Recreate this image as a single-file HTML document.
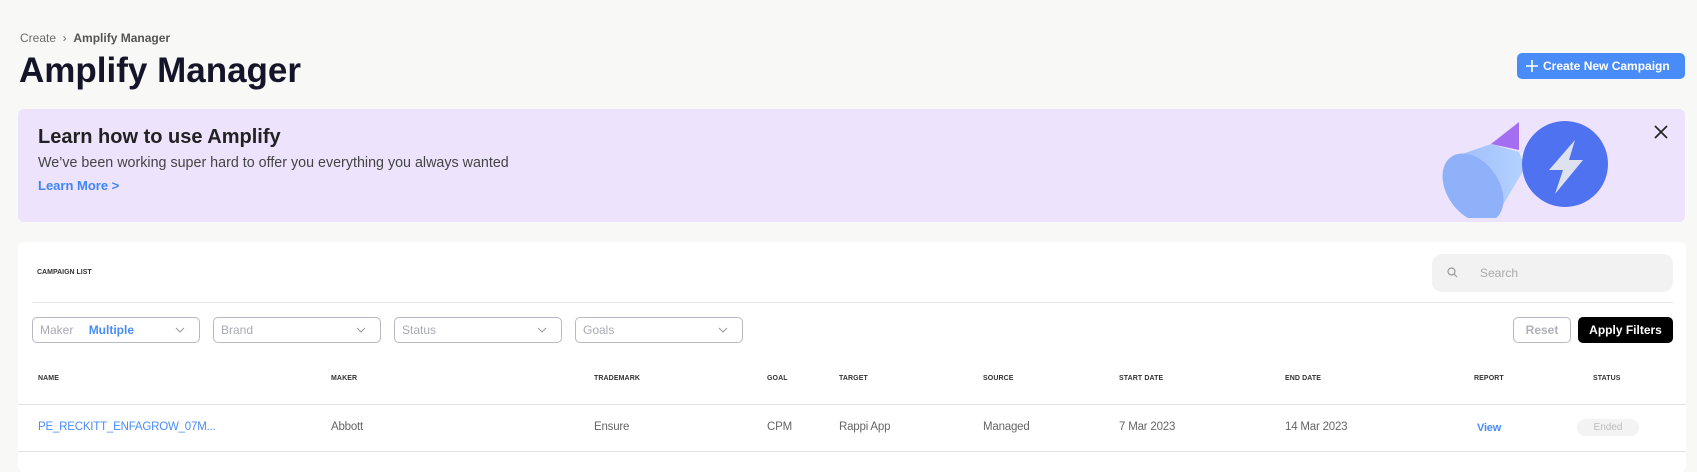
<!DOCTYPE html>
<html><head><meta charset="utf-8"><style>
*{margin:0;padding:0;box-sizing:border-box}
body{width:1697px;height:453px;overflow:hidden;background:#f8f8f6;font-family:"Liberation Sans",sans-serif;position:relative;color:#1a1a2e}
.a{position:absolute;white-space:nowrap}
.bc{left:20px;top:31px;font-size:12px;color:#6b6b6b}
.bc b{color:#555;font-weight:bold}
.title{left:19px;top:51px;font-size:35px;font-weight:bold;color:#15152a;letter-spacing:0px}
.btn{left:1517px;top:53px;width:168px;height:26px;background:#4a8cf7;border-radius:5px;color:#fff;font-size:12px;font-weight:bold;line-height:26px;padding-left:26px}
.banner{left:18px;top:109px;width:1667px;height:113px;background:#eee3fc;border-radius:6px}
.card{left:18px;top:242px;width:1668px;height:230px;background:#fff;border-radius:6px}
.dd{top:317px;height:26px;width:168px;border:1px solid #b9b9c6;border-radius:5px;font-size:12px;color:#a9a9b5;line-height:24px;padding-left:7px}
.dd svg{position:absolute;right:14px;top:9px}
.th{top:375px;font-size:7px;font-weight:bold;color:#333;letter-spacing:0.1px}
.td{top:421px;font-size:11.5px;color:#666;letter-spacing:-0.2px}
.line{position:absolute;height:1px;background:#e3e3e3}
</style></head><body>
<div class="a bc">Create &nbsp;›&nbsp; <b>Amplify Manager</b></div>
<div class="a title">Amplify Manager</div>
<div class="a btn"><svg style="position:absolute;left:9px;top:7px" width="12" height="12"><path d="M6 0V12M0 6H12" stroke="#fff" stroke-width="1.6"/></svg>Create New Campaign</div>

<div class="a banner"></div>
<div class="a" style="left:38px;top:126px;font-size:20px;font-weight:bold;color:#222">Learn how to use Amplify</div>
<div class="a" style="left:38px;top:155px;font-size:14.3px;color:#444">We’ve been working super hard to offer you everything you always wanted</div>
<div class="a" style="left:38px;top:178px;font-size:13px;font-weight:bold;color:#3d86f5">Learn More &gt;</div>
<svg class="a" style="left:1435px;top:118px" width="200" height="100">
<defs><linearGradient id="g1" x1="0" y1="0" x2="1" y2="0"><stop offset="0" stop-color="#9cbcfc"/><stop offset="1" stop-color="#b4d2ff"/></linearGradient></defs>
<polygon points="56,26 84,4 84,32" fill="#a36ef2"/>
<polygon points="16,40 56,26 84,34 90,50 60,100" fill="url(#g1)"/>
<ellipse cx="38" cy="70" rx="26" ry="38" transform="rotate(-35 38 70)" fill="#8fb1fa"/>
<polygon points="84,34 96,38 92,50" fill="#e8edf7"/>
<circle cx="130" cy="46" r="43" fill="#4f72f1"/>
<path d="M140 22 L114 52 L128 52 L120 76 L148 42 L134 42 Z" fill="#dde2ee"/>
</svg>
<svg class="a" style="left:1654px;top:125px" width="14" height="14"><path d="M1 1L13 13M13 1L1 13" stroke="#222" stroke-width="1.7"/></svg>

<div class="a card"></div>
<div class="a" style="left:37px;top:269px;font-size:7px;font-weight:bold;color:#333">CAMPAIGN LIST</div>
<div class="a" style="left:1432px;top:254px;width:241px;height:38px;background:#f2f2f2;border-radius:10px"></div>
<svg class="a" style="left:1447px;top:267px" width="11" height="11"><circle cx="4.5" cy="4.5" r="3.5" fill="none" stroke="#999" stroke-width="1.2"/><path d="M7 7L10 10" stroke="#999" stroke-width="1.2"/></svg>
<div class="a" style="left:1480px;top:266px;font-size:12px;color:#aaa">Search</div>
<div class="line" style="left:32px;top:302px;width:1641px"></div>

<div class="a dd" style="left:32px">Maker <span style="color:#4a8cf7;font-weight:bold;margin-left:12px">Multiple</span><svg width="10" height="6"><path d="M1 1L5 5L9 1" fill="none" stroke="#999"/></svg></div>
<div class="a dd" style="left:213px">Brand<svg width="10" height="6"><path d="M1 1L5 5L9 1" fill="none" stroke="#999"/></svg></div>
<div class="a dd" style="left:394px">Status<svg width="10" height="6"><path d="M1 1L5 5L9 1" fill="none" stroke="#999"/></svg></div>
<div class="a dd" style="left:575px">Goals<svg width="10" height="6"><path d="M1 1L5 5L9 1" fill="none" stroke="#999"/></svg></div>
<div class="a" style="left:1513px;top:317px;width:58px;height:26px;border:1px solid #b9b9c6;border-radius:5px;font-size:12px;font-weight:bold;color:#b0b0ba;text-align:center;line-height:24px">Reset</div>
<div class="a" style="left:1578px;top:317px;width:95px;height:26px;background:#000;border-radius:5px;font-size:12px;font-weight:bold;color:#fff;text-align:center;line-height:26px">Apply Filters</div>

<div class="a th" style="left:38px">NAME</div>
<div class="a th" style="left:331px">MAKER</div>
<div class="a th" style="left:594px">TRADEMARK</div>
<div class="a th" style="left:767px">GOAL</div>
<div class="a th" style="left:839px">TARGET</div>
<div class="a th" style="left:983px">SOURCE</div>
<div class="a th" style="left:1119px">START DATE</div>
<div class="a th" style="left:1285px">END DATE</div>
<div class="a th" style="left:1474px">REPORT</div>
<div class="a th" style="left:1593px">STATUS</div>
<div class="line" style="left:18px;top:404px;width:1668px"></div>
<div class="a td" style="left:38px;color:#4a8cf7">PE_RECKITT_ENFAGROW_07M...</div>
<div class="a td" style="left:331px">Abbott</div>
<div class="a td" style="left:594px">Ensure</div>
<div class="a td" style="left:767px">CPM</div>
<div class="a td" style="left:839px">Rappi App</div>
<div class="a td" style="left:983px">Managed</div>
<div class="a td" style="left:1119px">7 Mar 2023</div>
<div class="a td" style="left:1285px">14 Mar 2023</div>
<div class="a td" style="left:1477px;color:#4a8cf7;font-weight:bold;font-size:11px;top:422px">View</div>
<div class="a" style="left:1577px;top:419px;width:62px;height:17px;background:#f3f3f3;border-radius:8px;font-size:10px;color:#bbb;text-align:center;line-height:17px">Ended</div>
<div class="line" style="left:18px;top:451px;width:1668px"></div>
</body></html>
